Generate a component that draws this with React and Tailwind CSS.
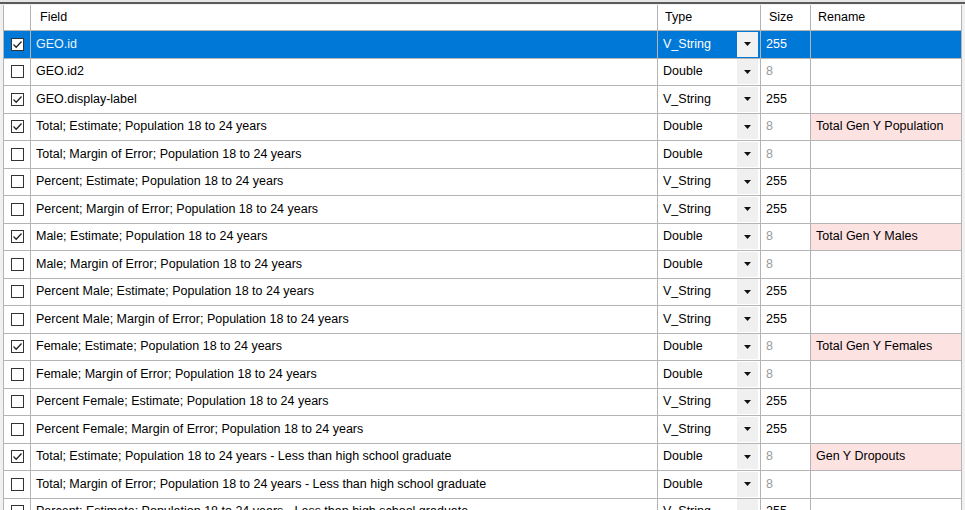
import React from 'react';

const rows = [
  { on: true, field: 'GEO.id', type: 'V_String', size: '255', rename: '', selected: true },
  { on: false, field: 'GEO.id2', type: 'Double', size: '8', rename: '' },
  { on: true, field: 'GEO.display-label', type: 'V_String', size: '255', rename: '' },
  { on: true, field: 'Total; Estimate; Population 18 to 24 years', type: 'Double', size: '8', rename: 'Total Gen Y Population' },
  { on: false, field: 'Total; Margin of Error; Population 18 to 24 years', type: 'Double', size: '8', rename: '' },
  { on: false, field: 'Percent; Estimate; Population 18 to 24 years', type: 'V_String', size: '255', rename: '' },
  { on: false, field: 'Percent; Margin of Error; Population 18 to 24 years', type: 'V_String', size: '255', rename: '' },
  { on: true, field: 'Male; Estimate; Population 18 to 24 years', type: 'Double', size: '8', rename: 'Total Gen Y Males' },
  { on: false, field: 'Male; Margin of Error; Population 18 to 24 years', type: 'Double', size: '8', rename: '' },
  { on: false, field: 'Percent Male; Estimate; Population 18 to 24 years', type: 'V_String', size: '255', rename: '' },
  { on: false, field: 'Percent Male; Margin of Error; Population 18 to 24 years', type: 'V_String', size: '255', rename: '' },
  { on: true, field: 'Female; Estimate; Population 18 to 24 years', type: 'Double', size: '8', rename: 'Total Gen Y Females' },
  { on: false, field: 'Female; Margin of Error; Population 18 to 24 years', type: 'Double', size: '8', rename: '' },
  { on: false, field: 'Percent Female; Estimate; Population 18 to 24 years', type: 'V_String', size: '255', rename: '' },
  { on: false, field: 'Percent Female; Margin of Error; Population 18 to 24 years', type: 'V_String', size: '255', rename: '' },
  { on: true, field: 'Total; Estimate; Population 18 to 24 years - Less than high school graduate', type: 'Double', size: '8', rename: 'Gen Y Dropouts' },
  { on: false, field: 'Total; Margin of Error; Population 18 to 24 years - Less than high school graduate', type: 'Double', size: '8', rename: '' },
  { on: false, field: 'Percent; Estimate; Population 18 to 24 years - Less than high school graduate', type: 'V_String', size: '255', rename: '' },
];

const grid = 'grid grid-cols-[27px_627px_103px_50px_151px]';
const cell = 'border-r border-b border-[#b4b4b4] flex items-center overflow-hidden whitespace-nowrap';

function CheckBox({ on }) {
  return (
    <div className="w-[13px] h-[13px] border border-[#333] bg-white flex items-center justify-center">
      {on && (
        <svg width="11" height="11" viewBox="0 0 11 11">
          <path d="M1.5 5.5 L4.2 8.2 L9.5 2.5" fill="none" stroke="#222" strokeWidth="1.3" />
        </svg>
      )}
    </div>
  );
}

function Row({ r }) {
  const sel = r.selected;
  const bg = sel ? 'bg-[#0078d7]' : 'bg-white';
  return (
    <div className={`${grid} h-[27.5px]`}>
      <div className={`${cell} ${bg} justify-center`}>
        <CheckBox on={r.on} />
      </div>
      <div className={`${cell} ${bg} pl-[5px] ${sel ? 'text-[#eaf4ff]' : 'text-black'}`}>{r.field}</div>
      <div className={`${cell} ${bg} pl-[5px] pr-[2px] justify-between ${sel ? 'text-white' : 'text-black'}`}>
        <span>{r.type}</span>
        <div className={`w-[21px] h-[25px] flex items-center justify-center ${sel ? 'bg-[#f2f2f2]' : 'bg-[#f0f0f0]'}`}>
          <svg width="7" height="4" viewBox="0 0 7 4"><path d="M0 0 H7 L3.5 4 Z" fill="#111" /></svg>
        </div>
      </div>
      <div className={`${cell} ${bg} pl-[5px] ${sel ? 'text-white' : r.size === '8' ? 'text-[#9a9a9a]' : 'text-black'}`}>{r.size}</div>
      <div className={`${cell} pl-[5px] text-black ${sel ? 'bg-[#0078d7]' : r.rename ? 'bg-[#fde2e2]' : 'bg-white'}`}>{r.rename}</div>
    </div>
  );
}

export default function App() {
  return (
    <div className="w-[965px] h-[510px] overflow-hidden bg-[#f0f0f0] text-[12.5px] text-black" style={{ fontFamily: '"Liberation Sans", Arial, sans-serif' }}>
      <div className="h-[2px] bg-[#e6e6e6]" />
      <div className="h-[2px] bg-[#5a5a5a]" />
      <div className="pl-[3px] pt-[1px]">
        <div className="w-[959px] border-l border-[#b4b4b4]">
          <div className={`${grid} h-[26px]`}>
            <div className={`${cell} bg-white`} />
            <div className={`${cell} bg-white pl-[9px]`}>Field</div>
            <div className={`${cell} bg-white pl-[7px]`}>Type</div>
            <div className={`${cell} bg-white pl-[8px]`}>Size</div>
            <div className={`${cell} bg-white pl-[7px]`}>Rename</div>
          </div>
          {rows.map((r, i) => (
            <Row key={i} r={r} />
          ))}
        </div>
      </div>
    </div>
  );
}
